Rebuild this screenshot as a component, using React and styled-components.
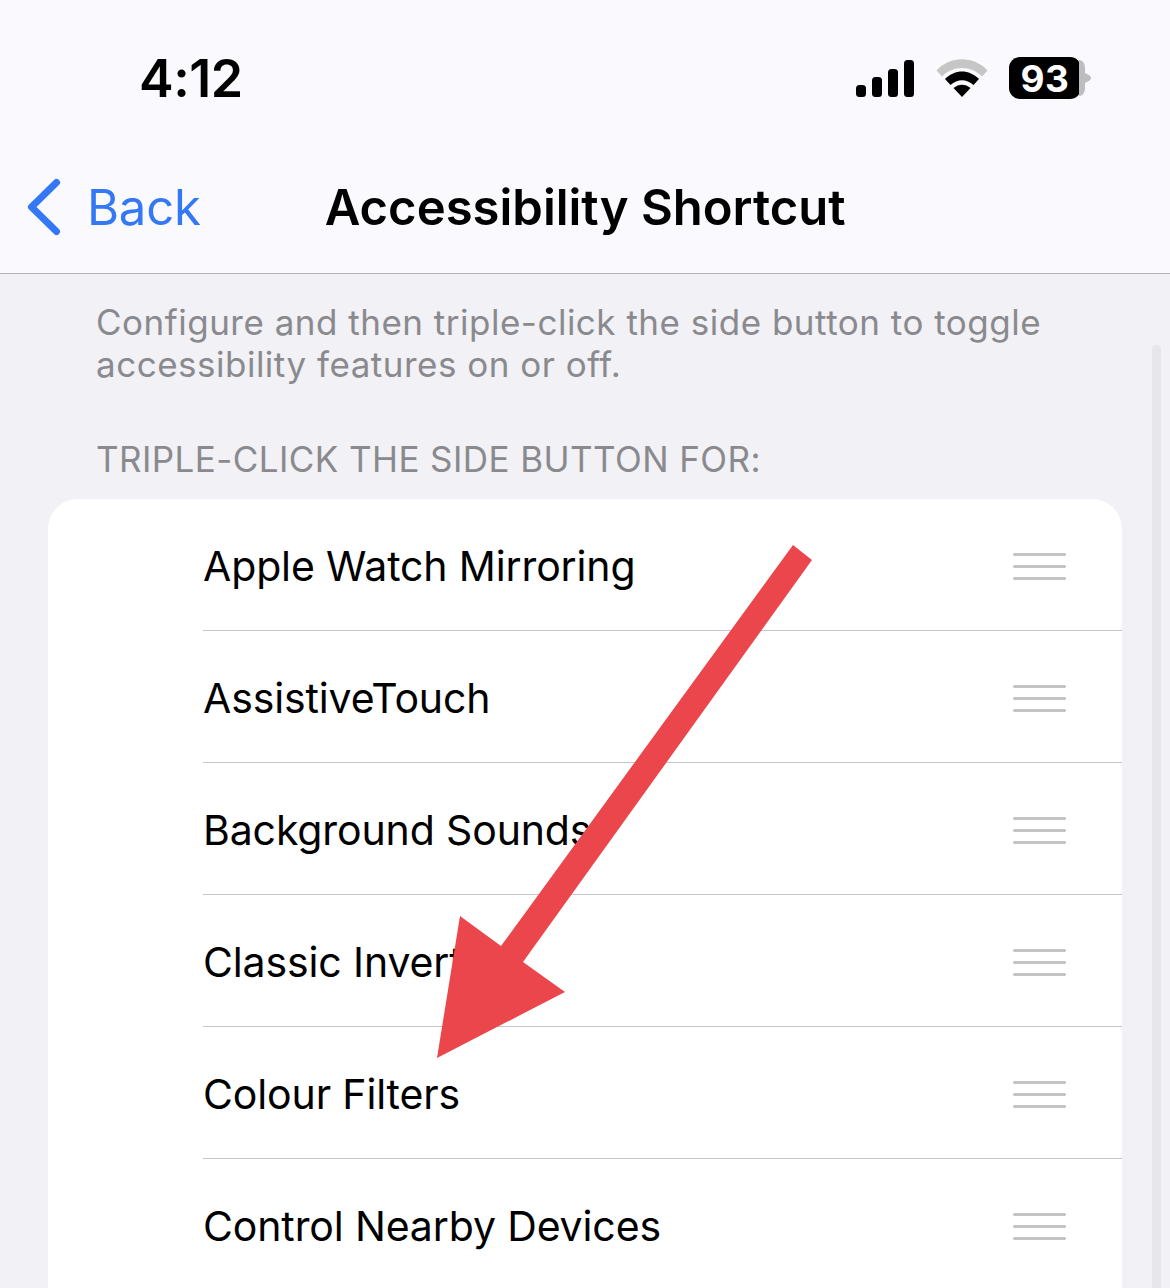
import React from "react";
import styled, { createGlobalStyle } from "styled-components";

const Global = createGlobalStyle`
  html, body { margin: 0; padding: 0; background: #f1f1f6; }
  body { font-family: Inter, "Liberation Sans", sans-serif; -webkit-font-smoothing: antialiased; }
`;

const Page = styled.div`
  position: relative;
  width: 1170px;
  height: 1288px;
  overflow: hidden;
  background: #f1f1f6;
`;
const Header = styled.header`
  height: 273px;
  background: #fafafe;
  border-bottom: 1px solid #b4b4b8;
  display: flex;
  flex-direction: column;
`;
const StatusBar = styled.div`
  height: 156px;
  display: flex;
  align-items: center;
  justify-content: space-between;
  padding: 0 80px 0 139px;
`;
const Time = styled.div`
  font-size: 52px;
  font-weight: 600;
  color: #000;
  letter-spacing: -0.5px;
`;
const StatusIcons = styled.div`
  display: flex;
  align-items: center;
  gap: 21px;
`;
const SignalIcon = styled.svg`
  margin-right: 1px;
`;
const Battery = styled.div`
  position: relative;
  display: flex;
  align-items: center;
  justify-content: center;
  width: 72px;
  height: 42px;
  border-radius: 11px;
  background: #000;
  color: #fff;
  font-size: 37px;
  font-weight: 700;
  letter-spacing: 0.5px;
  margin-right: 9px;
`;
const BatteryCap = styled.svg`
  position: absolute;
  left: 70px;
  top: 3px;
`;
const NavBar = styled.nav`
  position: relative;
  height: 102px;
  display: flex;
  align-items: center;
  padding-left: 27px;
`;
const BackLink = styled.div`
  display: flex;
  align-items: center;
  gap: 26px;
  color: #3478f6;
  font-size: 49px;
  font-weight: 400;
  letter-spacing: -0.2px;
`;
const NavTitle = styled.div`
  margin-left: 124px;
  font-size: 49px;
  font-weight: 600;
  color: #000;
`;
const Intro = styled.p`
  margin: 0;
  padding: 27px 100px 0 96px;
  font-size: 35px;
  line-height: 42px;
  color: #8a8a8e;
  letter-spacing: 0.5px;
`;
const SectionLabel = styled.div`
  padding: 53px 0 0 96px;
  font-size: 35px;
  line-height: 42px;
  color: #8a8a8e;
  letter-spacing: 0.42px;
`;
const Card = styled.ul`
  list-style: none;
  margin: 19px 48px 0;
  padding: 0;
  background: #fff;
  border-radius: 30px 30px 0 0;
`;
const Row = styled.li`
  height: 132px;
  margin-left: 155px;
  display: flex;
  align-items: center;
  justify-content: space-between;
  box-sizing: border-box;
  padding: 2px 56px 0 0;
  border-bottom: 1px solid ${p => (p.$last ? "transparent" : "#c6c6c8")};
  font-size: 41px;
  letter-spacing: -0.13px;
  color: #000;
`;
const Handle = styled.span`
  display: flex;
  flex-direction: column;
  gap: 9px;
  width: 53px;
  margin-top: 2px;
`;
const HandleBar = styled.span`
  height: 3px;
  border-radius: 2px;
  background: #c3c3c5;
`;
const Scrollbar = styled.div`
  position: absolute;
  left: 1152px;
  top: 345px;
  width: 9px;
  bottom: 0;
  border-radius: 5px 5px 0 0;
  background: #e6e6eb;
`;
const Arrow = styled.svg`
  position: absolute;
  left: 0;
  top: 0;
  pointer-events: none;
`;

const items = [
  "Apple Watch Mirroring",
  "AssistiveTouch",
  "Background Sounds",
  "Classic Invert",
  "Colour Filters",
  "Control Nearby Devices",
];

export default function App() {
  return (
    <Page>
      <Global />
      <Header>
        <StatusBar>
          <Time>4:12</Time>
          <StatusIcons>
            <SignalIcon width="58" height="37" viewBox="0 0 58 37">
              <rect x="0" y="25" width="10" height="12" rx="3.5" fill="#000" />
              <rect x="16" y="17" width="10" height="20" rx="3.5" fill="#000" />
              <rect x="32" y="9" width="10" height="28" rx="3.5" fill="#000" />
              <rect x="48" y="0" width="10" height="37" rx="3.5" fill="#000" />
            </SignalIcon>
            <svg width="52" height="38" viewBox="0 0 52 38">
              <path d="M0.5 11.5 C14 -3.5 38 -3.5 51.5 11.5 L46 17.5 C35 6 17 6 6 17.5 Z" fill="#c6c6c6" />
              <path d="M9 20 C19 10 33 10 43 20 L37.5 26 C30.5 19.5 21.5 19.5 14.5 26 Z" fill="#000" />
              <path d="M17.5 29 C22.5 24.5 29.5 24.5 34.5 29 L26 38 Z" fill="#000" />
            </svg>
            <Battery>
              93
              <BatteryCap width="13" height="36" viewBox="0 0 13 36">
                <path d="M0 0 C4 0 6 4 6 8 V13 C9.5 14.5 12 16 12 18 C12 20 9.5 21.5 6 23 V28 C6 32 4 36 0 36 Z" fill="#bdbdbf" />
              </BatteryCap>
            </Battery>
          </StatusIcons>
        </StatusBar>
        <NavBar>
          <BackLink>
            <svg width="34" height="58" viewBox="0 0 34 58">
              <path d="M29.5 4.5 L4.5 29 L29.5 53.5" fill="none" stroke="#3478f6" strokeWidth="7" strokeLinecap="round" strokeLinejoin="round" />
            </svg>
            Back
          </BackLink>
          <NavTitle>Accessibility Shortcut</NavTitle>
        </NavBar>
      </Header>
      <Intro>Configure and then triple-click the side button to toggle accessibility features on or off.</Intro>
      <SectionLabel>TRIPLE-CLICK THE SIDE BUTTON FOR:</SectionLabel>
      <Card>
        {items.map((t, i) => (
          <Row key={t} $last={i === items.length - 1}>
            {t}
            <Handle>
              <HandleBar />
              <HandleBar />
              <HandleBar />
            </Handle>
          </Row>
        ))}
      </Card>
      <Scrollbar />
      <Arrow width="1170" height="1288" viewBox="0 0 1170 1288">
        <path d="M793 545 L812 560 L523 962 L565 992 L437 1058 L460 916 L501 946 Z" fill="#eb464c" />
      </Arrow>
    </Page>
  );
}
